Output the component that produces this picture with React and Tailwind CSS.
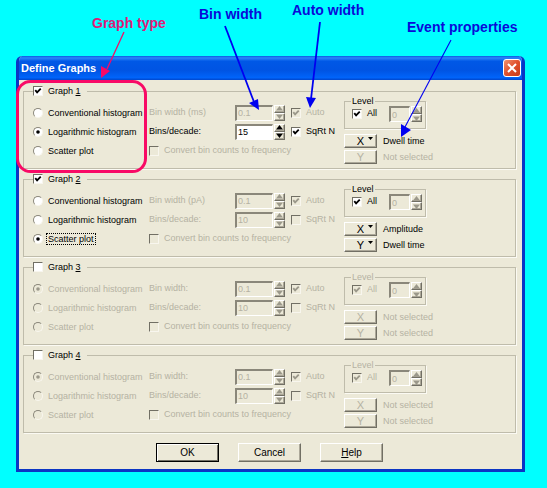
import React, { useState } from "react";
import clsx from "clsx";

const initialGraphs = [
  {
    id: 1,
    enabled: true,
    type: "log",
    binLabel: "Bin width (ms)",
    binsDecade: "15",
    binsActive: true,
    sqrt: true,
    x: "Dwell time",
    y: "",
  },
  {
    id: 2,
    enabled: true,
    type: "scatter",
    binLabel: "Bin width (pA)",
    binsDecade: "10",
    binsActive: false,
    sqrt: false,
    x: "Amplitude",
    y: "Dwell time",
  },
  {
    id: 3,
    enabled: false,
    type: "conv",
    binLabel: "Bin width:",
    binsDecade: "10",
    binsActive: false,
    sqrt: false,
    x: "",
    y: "",
  },
  {
    id: 4,
    enabled: false,
    type: "conv",
    binLabel: "Bin width:",
    binsDecade: "10",
    binsActive: false,
    sqrt: false,
    x: "",
    y: "",
  },
];

const graphTypes = [
  { value: "conv", label: "Conventional histogram" },
  { value: "log", label: "Logarithmic histogram" },
  { value: "scatter", label: "Scatter plot" },
];

const raised =
  "border border-t-white border-l-white border-r-[#716f64] border-b-[#716f64] bg-[#ece9d8] shadow-[inset_-1px_-1px_0_#aca899]";
const sunken =
  "border border-t-[#8a877a] border-l-[#8a877a] border-r-white border-b-white";

function CheckBox({ label, disabled, ...props }) {
  return (
    <label
      className={clsx(
        "flex items-center gap-[5px] whitespace-nowrap",
        disabled ? "text-[#b5b2a3]" : "text-black"
      )}
    >
      <span className="relative flex">
        <input
          type="checkbox"
          disabled={disabled}
          className={clsx(
            "peer h-[10px] w-[10px] appearance-none border border-t-[#716f64] border-l-[#716f64] border-r-[#f8f6ee] border-b-[#f8f6ee]",
            disabled ? "bg-[#ece9d8]" : "bg-white"
          )}
          {...props}
        />
        <svg
          viewBox="0 0 11 11"
          className="pointer-events-none absolute inset-0 hidden h-[10px] w-[10px] peer-checked:block"
        >
          <path
            d="M2.5 4.5 L4.5 7 L8.5 2.8"
            fill="none"
            stroke={disabled ? "#9b988a" : "#000"}
            strokeWidth="2"
          />
        </svg>
      </span>
      {label}
    </label>
  );
}

function Radio({ label, disabled, focused, ...props }) {
  return (
    <label
      className={clsx(
        "flex items-center gap-1 whitespace-nowrap",
        disabled ? "text-[#b5b2a3]" : "text-black"
      )}
    >
      <span className="relative flex">
        <input
          type="radio"
          disabled={disabled}
          className={clsx(
            "peer h-[10px] w-[10px] appearance-none rounded-full border border-t-[#8a877a] border-l-[#8a877a] border-r-[#f8f6ee] border-b-[#f8f6ee]",
            disabled ? "bg-[#ece9d8]" : "bg-white"
          )}
          {...props}
        />
        <svg
          viewBox="0 0 10 10"
          className="pointer-events-none absolute inset-0 hidden h-[10px] w-[10px] peer-checked:block"
        >
          <circle cx="5" cy="5" r="1.8" fill={disabled ? "#9b988a" : "#000"} />
        </svg>
      </span>
      <span
        className={clsx(
          "px-px leading-[10px]",
          focused && "outline outline-dotted outline-black"
        )}
      >
        {label}
      </span>
    </label>
  );
}

function Spinner({ value, onChange, disabled, label, width }) {
  const step = (n) => onChange(String(Number(value) + n));
  return (
    <div className="flex items-center gap-px">
      <input
        type="text"
        aria-label={label}
        value={value}
        disabled={disabled}
        onChange={(e) => onChange(e.target.value)}
        className={clsx(
          "h-[16px] border-t-2 border-l-2 px-px leading-3",
          sunken,
          width,
          disabled ? "bg-[#ece9d8] text-[#b5b2a3]" : "bg-white text-black"
        )}
      />
      <div className="flex flex-col">
        {[1, -1].map((dir) => (
          <button
            key={dir}
            type="button"
            disabled={disabled}
            aria-label={dir > 0 ? `${label} up` : `${label} down`}
            onClick={() => step(dir)}
            className={clsx("flex h-[8px] w-[11px] items-center justify-center", raised)}
          >
            <svg viewBox="0 0 7 5" className="h-[5px] w-[7px]">
              <path
                d={dir > 0 ? "M3.5 0 L7 4.5 H0 Z" : "M3.5 5 L7 0.5 H0 Z"}
                fill={disabled ? "#9b988a" : "#000"}
              />
            </svg>
          </button>
        ))}
      </div>
    </div>
  );
}

function AxisButton({ axis, value, enabled }) {
  const active = enabled && value;
  return (
    <div className="flex items-center gap-[6px]">
      <button
        type="button"
        disabled={!active}
        className={clsx(
          "relative h-[14px] w-[33px] text-center text-[11px] leading-3",
          raised,
          active ? "text-black" : "text-[#b5b2a3]"
        )}
      >
        {axis}
        {active && (
          <svg viewBox="0 0 5 3" className="absolute top-[2px] right-[3px] h-[3px] w-[5px]">
            <path d="M0 0 H5 L2.5 3 Z" fill="#000" />
          </svg>
        )}
      </button>
      <span
        className={clsx(
          "leading-3 whitespace-nowrap",
          active ? "text-black" : "text-[#b5b2a3]"
        )}
      >
        {value || "Not selected"}
      </span>
    </div>
  );
}

function GraphGroup({ graph }) {
  const [enabled, setEnabled] = useState(graph.enabled);
  const [type, setType] = useState(graph.type);
  const [binWidth, setBinWidth] = useState("0.1");
  const [bins, setBins] = useState(graph.binsDecade);
  const [level, setLevel] = useState("0");
  const binsActive = enabled && graph.binsActive;

  return (
    <fieldset className="border border-[#bfbcab] pb-1 pl-[9px] shadow-[1px_1px_0_#fbfaf3]">
      <legend className="h-[10px] pr-[6px] leading-[10px]">
        <CheckBox
          checked={enabled}
          onChange={(e) => setEnabled(e.target.checked)}
          label={
            <span>
              Graph <u>{graph.id}</u>
            </span>
          }
        />
      </legend>
      <div className="flex">
        <div className="grid w-[116px] shrink-0 auto-rows-[19px] pt-[7px]">
          {graphTypes.map((t) => (
            <Radio
              key={t.value}
              name={`type-${graph.id}`}
              label={t.label}
              checked={type === t.value}
              onChange={() => setType(t.value)}
              disabled={!enabled}
              focused={graph.id === 2 && t.value === "scatter"}
            />
          ))}
        </div>

        <div className="grid w-[195px] shrink-0 auto-rows-[19px] grid-cols-[86px_56px_auto] items-center pt-[7px]">
          <span className="text-[#b5b2a3]">{graph.binLabel}</span>
          <Spinner
            label={`Graph ${graph.id} bin width`}
            value={binWidth}
            onChange={setBinWidth}
            width="w-[38px]"
            disabled
          />
          <CheckBox label="Auto" defaultChecked disabled />

          <span className={binsActive ? "text-black" : "text-[#b5b2a3]"}>Bins/decade:</span>
          <Spinner
            label={`Graph ${graph.id} bins per decade`}
            value={bins}
            onChange={setBins}
            width="w-[38px]"
            disabled={!binsActive}
          />
          <CheckBox label="SqRt N" defaultChecked={graph.sqrt} disabled={!binsActive} />

          <div className="col-span-3">
            <CheckBox label="Convert bin counts to frequency" disabled />
          </div>
        </div>

        <div className="flex flex-col">
          <fieldset className="h-[33px] w-[82px] border border-[#bfbcab] pl-[7px] shadow-[1px_1px_0_#fbfaf3]">
            <legend
              className={clsx(
                "-ml-px h-[10px] px-px leading-[10px]",
                enabled ? "text-black" : "text-[#b5b2a3]"
              )}
            >
              Level
            </legend>
            <div className="flex items-center justify-between pr-[3px]">
              <CheckBox label="All" defaultChecked disabled={!enabled} />
              <Spinner
                label={`Graph ${graph.id} level`}
                value={level}
                onChange={setLevel}
                width="w-[21px]"
                disabled
              />
            </div>
          </fieldset>
          <div className="mt-[5px] flex flex-col gap-[2px]">
            <AxisButton axis="X" value={graph.x} enabled={enabled} />
            <AxisButton axis="Y" value={graph.y} enabled={enabled} />
          </div>
        </div>
      </div>
    </fieldset>
  );
}

function Callouts() {
  return (
    <div className="pointer-events-none absolute top-0 left-0 text-[14px] leading-4 font-bold whitespace-nowrap text-[#0a0ad8]">
      <span className="absolute top-[15px] left-[92px] text-[#e01878]">Graph type</span>
      <span className="absolute top-[6px] left-[199px]">Bin width</span>
      <span className="absolute top-[2px] left-[292px]">Auto width</span>
      <span className="absolute top-[19px] left-[407px]">Event properties</span>
      <svg viewBox="0 0 547 200" className="h-[200px] w-[547px] max-w-none">
        <rect
          x="17.5"
          y="81.5"
          width="128"
          height="90"
          rx="13"
          fill="none"
          stroke="#f80a66"
          strokeWidth="3"
        />
        <g stroke="#f80a66" fill="#f80a66">
          <path d="M124 32 L107 69" strokeWidth="1.3" />
          <path d="M101 66 L110 71 L101 78 Z" stroke="none" />
        </g>
        <g stroke="#0000f0" fill="#0000f0">
          <path d="M225 26 L254 102" strokeWidth="1.8" />
          <path d="M249 103 L258 99 L259 110 Z" stroke="none" />
          <path d="M320 22 L311 99" strokeWidth="1.8" />
          <path d="M306 97 L316 98 L310 108 Z" stroke="none" />
          <path d="M451 40 L405 127" strokeWidth="1.1" />
          <path d="M401 124 L411 130 L401 137 Z" stroke="none" />
        </g>
      </svg>
    </div>
  );
}

const dialogButton = "h-[19px] w-[63px] text-center text-[10px] leading-4";

export default function App() {
  return (
    <main className="relative min-h-screen bg-[#00ffff] pt-[56px] pr-[22px] pb-4 pl-4 font-['Liberation_Sans',Arial,sans-serif]">
      <section className="overflow-hidden rounded-t-md border-x-[3px] border-b-[3px] border-[#0b35c4] bg-[#ece9d8]">
        <header className="flex h-6 items-center justify-between bg-[linear-gradient(#0a5be0,#2b86fb_8%,#0058e6_22%,#0054e3_60%,#0064fa_90%,#0046cc)] pr-px pl-[2px]">
          <h1 className="text-[11px] font-bold text-white">Define Graphs</h1>
          <button
            type="button"
            aria-label="Close"
            className="flex h-[18px] w-[18px] items-center justify-center rounded-[3px] border border-white bg-[linear-gradient(135deg,#f0926f,#e0502c_50%,#c83a18)]"
          >
            <svg viewBox="0 0 10 10" className="h-[10px] w-[10px]">
              <path d="M1 1 L9 9 M9 1 L1 9" stroke="#fff" strokeWidth="2" />
            </svg>
          </button>
        </header>

        <form
          className="pt-[6px] pr-[6px] pb-[7px] pl-1 text-[9px]"
          onSubmit={(e) => e.preventDefault()}
        >
          <div className="flex flex-col gap-[5px]">
            {initialGraphs.map((g) => (
              <GraphGroup key={g.id} graph={g} />
            ))}
          </div>
          <div className="mt-[10px] flex justify-center gap-[19px]">
            <button
              type="submit"
              className={clsx(
                dialogButton,
                "border border-black bg-[#ece9d8] shadow-[inset_1px_1px_0_#fff,inset_-1px_-1px_0_#716f64]"
              )}
            >
              OK
            </button>
            <button type="button" className={clsx(dialogButton, raised)}>
              Cancel
            </button>
            <button type="button" className={clsx(dialogButton, raised)}>
              <u>H</u>elp
            </button>
          </div>
        </form>
      </section>
      <Callouts />
    </main>
  );
}
